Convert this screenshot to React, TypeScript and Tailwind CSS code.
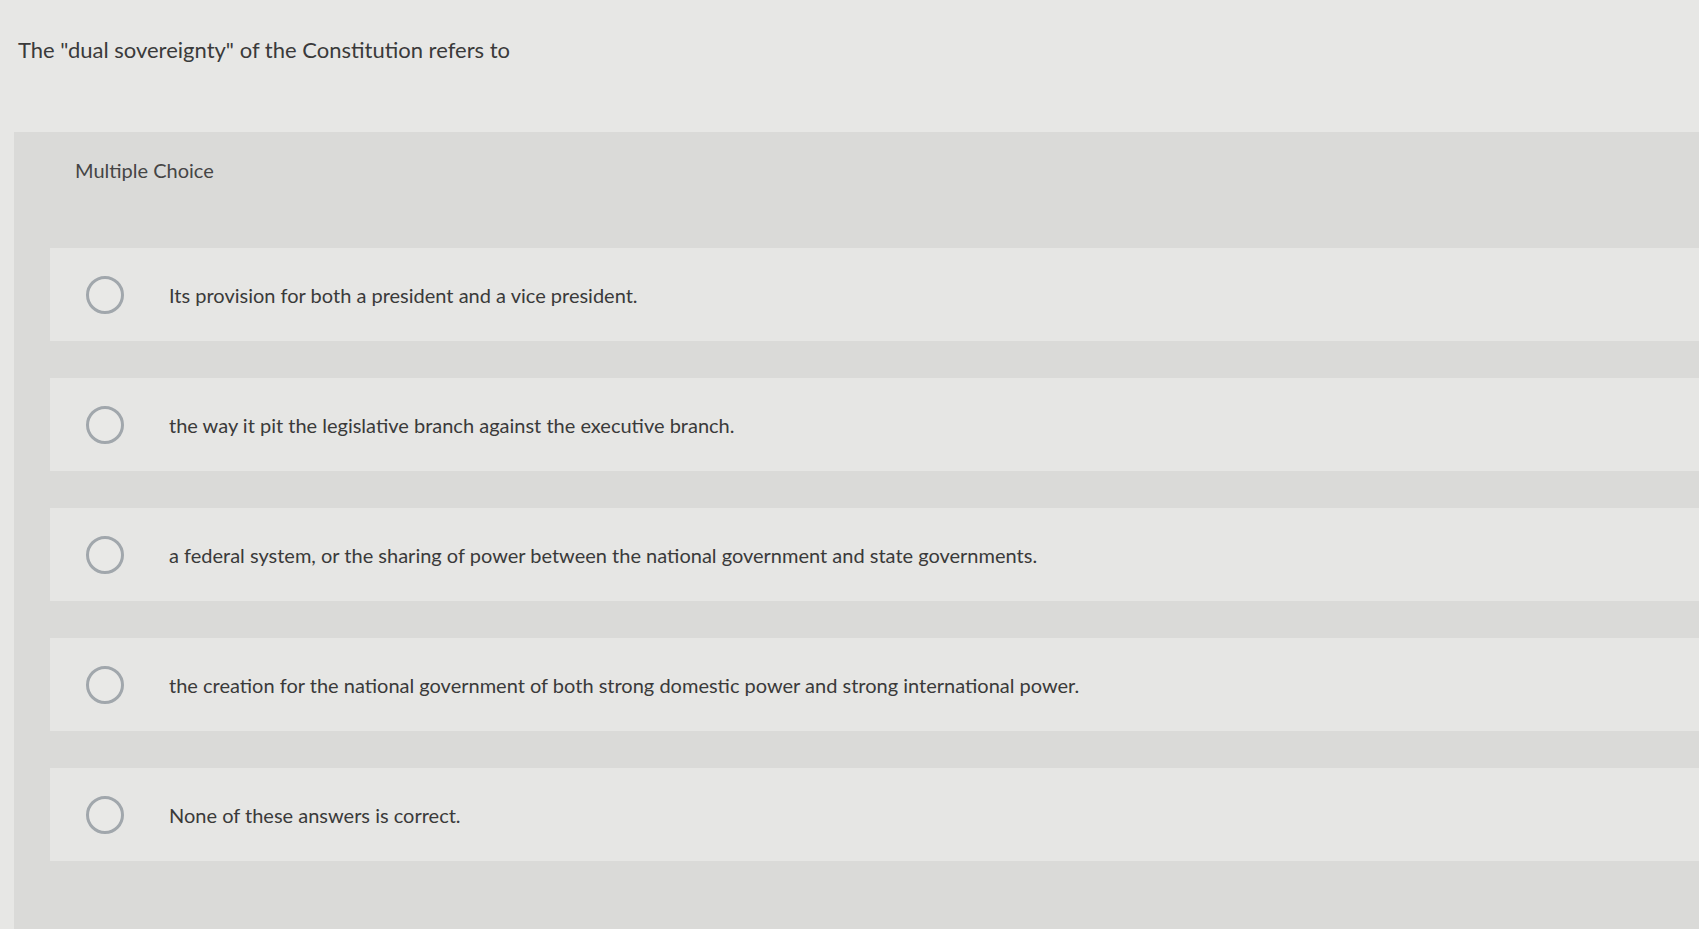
import React from "react";

const choices = [
  "Its provision for both a president and a vice president.",
  "the way it pit the legislative branch against the executive branch.",
  "a federal system, or the sharing of power between the national government and state governments.",
  "the creation for the national government of both strong domestic power and strong international power.",
  "None of these answers is correct.",
];

function Radio() {
  return <span className="block h-[38px] w-[38px] shrink-0 rounded-full border-[3px] border-[#a1a7ac] bg-[#e9e9e7]" />;
}

export default function App() {
  return (
    <div className="min-h-[929px] w-full overflow-hidden bg-[#e7e7e5] font-['Lato','Liberation_Sans',sans-serif] text-[#3a3a3a]">
      <h1 className="pl-[18px] pt-[35px] text-[22px] leading-[30px]">
        The "dual sovereignty" of the Constitution refers to
      </h1>

      <section className="ml-[14px] mt-[67px] min-h-[797px] bg-[#dadad8]">
        <div className="h-[116px] pl-[61px] pt-[25px] text-[20px] leading-[26px] text-[#454545]">Multiple Choice</div>

        <div className="flex flex-col gap-[37px] pl-[36px]">
          {choices.map((c) => (
            <label key={c} className="flex h-[93px] items-center bg-[#e6e6e4] pl-[36px]">
              <Radio />
              <span className="ml-[45px] text-[20px] leading-[26px]">{c}</span>
            </label>
          ))}
        </div>
      </section>
    </div>
  );
}
